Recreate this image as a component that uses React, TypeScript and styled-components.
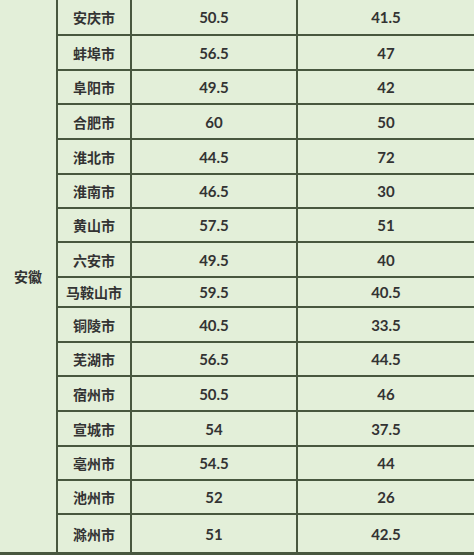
import React from "react";
import styled, { createGlobalStyle } from "styled-components";

const GlobalStyle = createGlobalStyle`
  html, body {
    margin: 0;
    padding: 0;
    background: #e3efd9;
  }
`;

const rows: { city: string; a: string; b: string; h: number }[] = [
  { city: "安庆市", a: "50.5", b: "41.5", h: 36 },
  { city: "蚌埠市", a: "56.5", b: "47", h: 35 },
  { city: "阜阳市", a: "49.5", b: "42", h: 34 },
  { city: "合肥市", a: "60", b: "50", h: 35 },
  { city: "淮北市", a: "44.5", b: "72", h: 35 },
  { city: "淮南市", a: "46.5", b: "30", h: 34 },
  { city: "黄山市", a: "57.5", b: "51", h: 34 },
  { city: "六安市", a: "49.5", b: "40", h: 35 },
  { city: "马鞍山市", a: "59.5", b: "40.5", h: 30 },
  { city: "铜陵市", a: "40.5", b: "33.5", h: 35 },
  { city: "芜湖市", a: "56.5", b: "44.5", h: 34 },
  { city: "宿州市", a: "50.5", b: "46", h: 35 },
  { city: "宣城市", a: "54", b: "37.5", h: 35 },
  { city: "亳州市", a: "54.5", b: "44", h: 34 },
  { city: "池州市", a: "52", b: "26", h: 34 },
  { city: "滁州市", a: "51", b: "42.5", h: 40 },
];

const Grid = styled.div<{ $rows: string }>`
  display: grid;
  grid-template-columns: 58px 74px 166px 1fr;
  grid-template-rows: ${(p) => p.$rows};
  width: 474px;
  background: #e3efd9;
  color: #333333;
`;

const Cell = styled.div<{ $last?: boolean; $right?: boolean }>`
  display: flex;
  align-items: center;
  justify-content: center;
  box-sizing: border-box;
  border-bottom: ${(p) => (p.$last ? "3px" : "2px")} solid #48573f;
  border-right: ${(p) => (p.$right ? "2px solid #48573f" : "none")};
`;

const Province = styled(Cell)`
  grid-row: 1 / -1;
  grid-column: 1;
  font-family: "Noto Sans CJK SC", "Noto Sans", sans-serif;
  font-weight: 700;
  font-size: 14px;
`;

const City = styled(Cell)`
  font-family: "Noto Sans CJK SC", "Noto Sans", sans-serif;
  font-weight: 700;
  font-size: 14px;
`;

const Num = styled(Cell)`
  font-family: Lato, "Liberation Sans", sans-serif;
  font-weight: 700;
  font-size: 15px;
`;

export default function App() {
  const template = rows.map((r) => `${r.h}px`).join(" ");
  return (
    <>
      <GlobalStyle />
      <Grid $rows={template}>
        <Province $last $right>
          安徽
        </Province>
        {rows.map((r, i) => {
          const last = i === rows.length - 1;
          return (
            <React.Fragment key={r.city}>
              <City $last={last} $right>
                {r.city}
              </City>
              <Num $last={last} $right>
                {r.a}
              </Num>
              <Num $last={last}>{r.b}</Num>
            </React.Fragment>
          );
        })}
      </Grid>
    </>
  );
}
